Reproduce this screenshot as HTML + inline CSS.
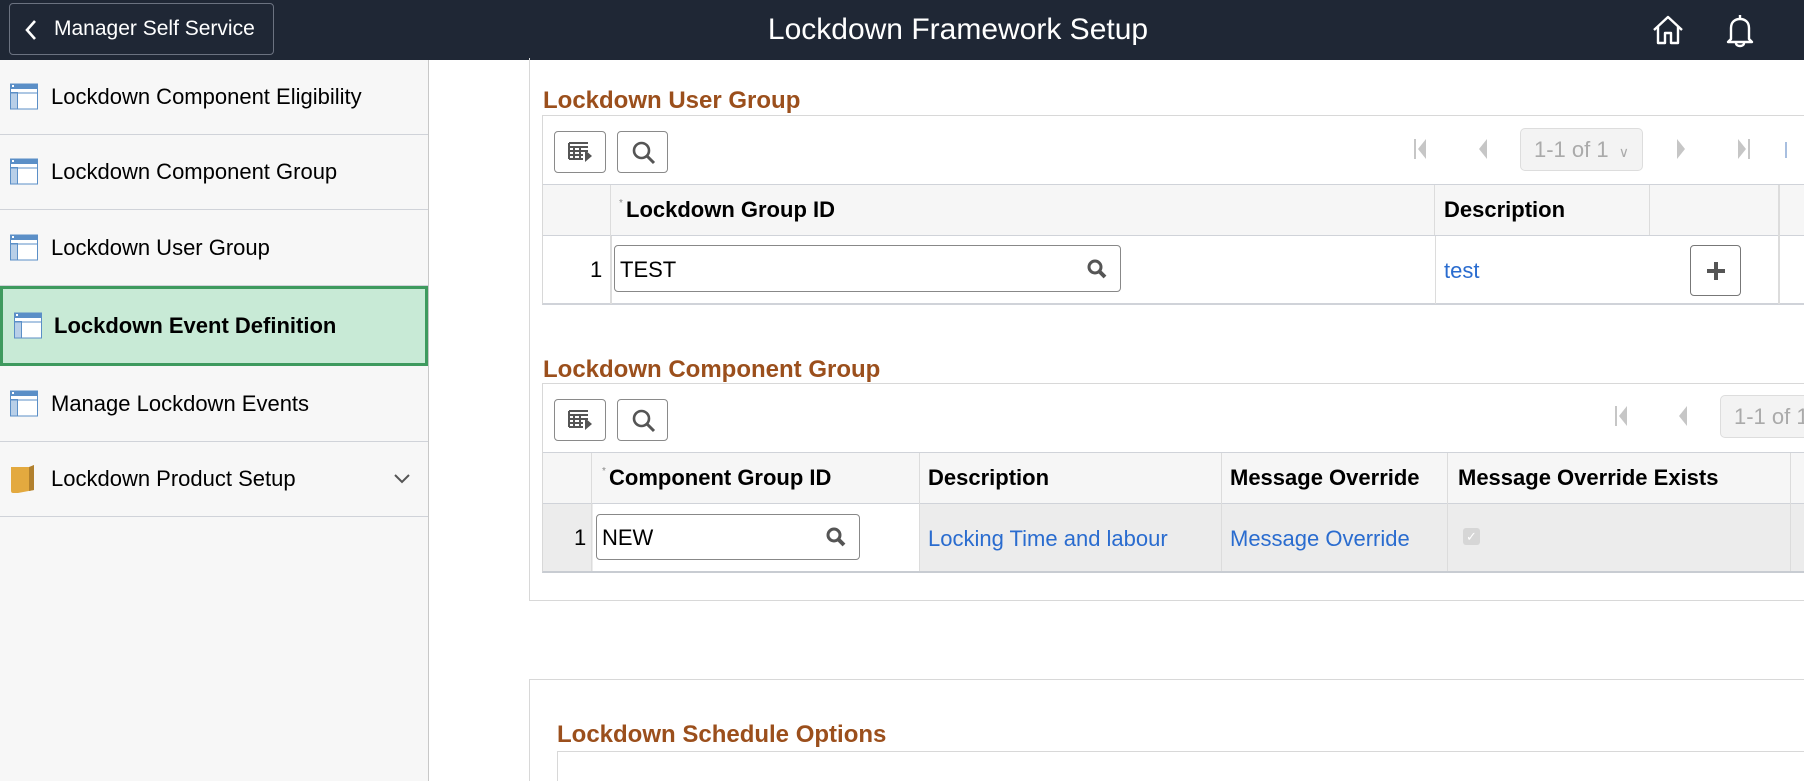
<!DOCTYPE html>
<html style="overflow:hidden;height:781px"><head><meta charset="utf-8">
<style>
*{box-sizing:border-box;margin:0;padding:0}
body{width:1804px;height:781px;overflow:hidden;background:#fff;font-family:"Liberation Sans",Arial,sans-serif;position:relative;color:#000}
.abs{position:absolute}
#hdr{left:0;top:0;width:1804px;height:60px;background:#1f2735}
#back{left:9px;top:3px;width:265px;height:52px;border:1px solid #6b7280;border-radius:4px;color:#fff;font-size:21px;line-height:50px;padding-left:44px}
#title{left:0;width:1916px;top:0;text-align:center;color:#fff;font-size:30px;line-height:60px}
#side{left:0;top:60px;width:429px;height:721px;background:#f7f7f7;border-right:1px solid #c8c8c8}
.item{position:absolute;left:0;width:428px;border-bottom:1px solid #d0d3d9;font-size:22px;color:#000}
.item span{position:absolute;left:51px;top:50%;transform:translateY(-50%)}
.item svg{position:absolute;left:10px;top:50%;transform:translateY(-50%)}
.sel{background:#c8ead6;border:3px solid #3e9a5e}
.box{border:1px solid #d8d8d8}
.h{color:#9b4f1c;font-weight:bold;font-size:24px}
.btn{position:absolute;width:52px;height:42px;border:1px solid #8a8a8a;border-radius:4px;background:#fff}
.cell{position:absolute;border-right:1px solid #dcdcdc;font-size:22px}
.th{font-weight:bold;background:#f6f6f6}
.inp{position:absolute;border:1px solid #888;border-radius:4px;background:#fff;font-size:22px;padding-left:5px}
.lnk{color:#2a6ccf;font-size:22px}
</style></head><body>
<div id="hdr" class="abs"></div>
<div id="back" class="abs"><svg class="abs" style="left:14px;top:15px" width="14" height="22" viewBox="0 0 14 22"><path d="M11 2 L3 11 L11 20" stroke="#fff" stroke-width="2.6" fill="none"/></svg>Manager Self Service</div>
<div id="title" class="abs">Lockdown Framework Setup</div>
<svg class="abs" style="left:1651px;top:14px" width="34" height="32" viewBox="0 0 34 32"><path d="M3 16 L17 3 L31 16 M7 13 V29 H14 V19 H20 V29 H27 V13" stroke="#fff" stroke-width="2.4" fill="none" stroke-linejoin="round"/></svg>
<svg class="abs" style="left:1725px;top:12px" width="30" height="36" viewBox="0 0 30 36"><path d="M15 3 V6 M6 27 V16 C6 10 10 7 15 7 C20 7 24 10 24 16 V27 L27 30 H3 L6 27 Z M11 31 C11 35 19 35 19 31" stroke="#fff" stroke-width="2.4" fill="none" stroke-linejoin="round"/></svg>

<div id="side" class="abs">
<svg width="0" height="0" style="position:absolute"><defs><g id="ic"><rect x="0.5" y="0.5" width="27" height="25" fill="#fff" stroke="#5b8fc7"/><rect x="0.5" y="0.5" width="27" height="5" fill="#5b8fc7"/><rect x="2" y="1.5" width="2" height="2" fill="#fff"/><rect x="0.5" y="9" width="7" height="16.5" fill="#b8cfe8" stroke="#5b8fc7"/><rect x="0.5" y="9" width="27" height="1" fill="#5b8fc7"/></g></defs></svg>
<div class="item" style="top:0;height:75px"><svg width="28" height="27"><use href="#ic"/></svg><span>Lockdown Component Eligibility</span></div>
<div class="item" style="top:75px;height:75px"><svg width="28" height="27"><use href="#ic"/></svg><span>Lockdown Component Group</span></div>
<div class="item" style="top:150px;height:76px"><svg width="28" height="27"><use href="#ic"/></svg><span>Lockdown User Group</span></div>
<div class="item sel" style="top:226px;height:80px"><svg width="28" height="27" style="left:11px"><use href="#ic"/></svg><span style="left:51px;font-weight:bold">Lockdown Event Definition</span></div>
<div class="item" style="top:306px;height:76px"><svg width="28" height="27"><use href="#ic"/></svg><span>Manage Lockdown Events</span></div>
<div class="item" style="top:382px;height:75px"><svg width="26" height="30" viewBox="0 0 26 30"><path d="M1 3 H20 L24 1 V26 L8 29 H3 C1 29 1 27 1 26 Z" fill="#e3a93f"/><path d="M19 3 L24 1 V26 L19 27 Z" fill="#b1802e"/></svg><span>Lockdown Product Setup</span><svg style="left:393px" width="18" height="12" viewBox="0 0 18 12"><path d="M2 2 L9 9 L16 2" stroke="#555" stroke-width="2" fill="none"/></svg></div>
</div>

<div class="abs box" style="left:529px;top:58px;width:1290px;height:543px;border-top:none"></div>
<div class="abs h" style="left:543px;top:87px">Lockdown User Group</div>
<div class="abs box" style="left:542px;top:115px;width:1280px;height:190px;border-bottom:2px solid #d0d3d9"></div>
<div class="btn" style="left:554px;top:131px"><svg class="abs" style="left:13px;top:9px" width="26" height="24" viewBox="0 0 26 24"><path d="M1 2 H20 M1 6 H20 M1 10 H20 M1 14 H15 M1 18 H15 M6 6 V18 M12 6 V18 M1 2 V18" stroke="#555" stroke-width="2" fill="none"/><path d="M17 9 L24 15 L17 21 Z" fill="#555"/></svg></div>
<div class="btn" style="left:617px;top:131px;width:51px"><svg class="abs" style="left:13px;top:8px" width="26" height="26" viewBox="0 0 26 26"><circle cx="10.5" cy="10.5" r="7.5" stroke="#555" stroke-width="2.6" fill="none"/><path d="M16 16 L23 23" stroke="#555" stroke-width="3"/></svg></div>
<svg class="abs" style="left:1413px;top:138px" width="16" height="22"><path d="M2 1 V21" stroke="#c6c6c6" stroke-width="2"/><path d="M13 1 L5 11 L13 21 Z" fill="#c6c6c6"/></svg>
<svg class="abs" style="left:1476px;top:138px" width="12" height="22"><path d="M11 1 L3 11 L11 21 Z" fill="#c6c6c6"/></svg>
<div class="abs" style="left:1520px;top:128px;width:123px;height:43px;background:#f3f3f3;border:1px solid #ddd;border-radius:5px;color:#aaa;font-size:22px;line-height:41px;padding-left:13px">1-1 of 1 <span style="font-size:14px;margin-left:4px">&#8744;</span></div>
<svg class="abs" style="left:1676px;top:138px" width="12" height="22"><path d="M1 1 L9 11 L1 21 Z" fill="#c6c6c6"/></svg>
<svg class="abs" style="left:1735px;top:138px" width="16" height="22"><path d="M14 1 V21" stroke="#c6c6c6" stroke-width="2"/><path d="M3 1 L11 11 L3 21 Z" fill="#c6c6c6"/></svg>
<div class="abs" style="left:1785px;top:142px;width:2px;height:16px;background:#a8bfe0"></div>

<div class="abs" style="left:543px;top:184px;width:1261px;height:52px;background:#f6f6f6;border-top:1px solid #d0d3d9;border-bottom:1px solid #d0d3d9"></div>
<div class="cell th" style="left:543px;top:185px;width:68px;height:119px;background:transparent"></div>
<div class="cell th" style="left:611px;top:185px;width:824px;height:50px;line-height:50px;padding-left:15px;background:transparent"><span style="font-size:10px;color:#888;font-weight:normal;position:absolute;left:8px;top:-6px">*</span>Lockdown Group ID</div>
<div class="cell th" style="left:1435px;top:185px;width:215px;height:50px;line-height:50px;padding-left:9px;background:transparent">Description</div>
<div class="cell" style="left:1650px;top:185px;width:129px;height:119px"></div>
<div class="cell" style="left:1779px;top:185px;width:1px;height:119px"></div>
<div class="cell" style="left:1435px;top:236px;width:1px;height:68px"></div>
<div class="cell" style="left:611px;top:236px;width:1px;height:68px"></div>
<div class="abs" style="left:590px;top:257px;font-size:22px">1</div>
<div class="inp" style="left:614px;top:245px;width:507px;height:47px;line-height:47px">TEST<svg class="abs" style="right:12px;top:12px" width="22" height="22" viewBox="0 0 22 22"><circle cx="9" cy="9" r="6" stroke="#555" stroke-width="3" fill="none"/><path d="M13 13 L19 19" stroke="#555" stroke-width="4"/></svg></div>
<div class="abs lnk" style="left:1444px;top:258px">test</div>
<div class="abs" style="left:1690px;top:245px;width:51px;height:51px;border:1px solid #777;border-radius:4px"><svg class="abs" style="left:15px;top:15px" width="20" height="20"><path d="M10 1 V19 M1 10 H19" stroke="#555" stroke-width="4"/></svg></div>

<div class="abs h" style="left:543px;top:356px">Lockdown Component Group</div>
<div class="abs box" style="left:542px;top:383px;width:1280px;height:190px;border-bottom:3px solid #c8ccd2"></div>
<div class="btn" style="left:554px;top:399px"><svg class="abs" style="left:13px;top:9px" width="26" height="24" viewBox="0 0 26 24"><path d="M1 2 H20 M1 6 H20 M1 10 H20 M1 14 H15 M1 18 H15 M6 6 V18 M12 6 V18 M1 2 V18" stroke="#555" stroke-width="2" fill="none"/><path d="M17 9 L24 15 L17 21 Z" fill="#555"/></svg></div>
<div class="btn" style="left:617px;top:399px;width:51px"><svg class="abs" style="left:13px;top:8px" width="26" height="26" viewBox="0 0 26 26"><circle cx="10.5" cy="10.5" r="7.5" stroke="#555" stroke-width="2.6" fill="none"/><path d="M16 16 L23 23" stroke="#555" stroke-width="3"/></svg></div>
<svg class="abs" style="left:1614px;top:405px" width="16" height="22"><path d="M2 1 V21" stroke="#c6c6c6" stroke-width="2"/><path d="M13 1 L5 11 L13 21 Z" fill="#c6c6c6"/></svg>
<svg class="abs" style="left:1676px;top:405px" width="12" height="22"><path d="M11 1 L3 11 L11 21 Z" fill="#c6c6c6"/></svg>
<div class="abs" style="left:1720px;top:395px;width:123px;height:43px;background:#f3f3f3;border:1px solid #ddd;border-radius:5px;color:#aaa;font-size:22px;line-height:41px;padding-left:13px">1-1 of 1</div>

<div class="abs" style="left:543px;top:452px;width:1261px;height:52px;background:#f6f6f6;border-top:1px solid #d0d3d9;border-bottom:1px solid #d0d3d9"></div>
<div class="abs" style="left:543px;top:504px;width:1261px;height:67px;background:#ececec"></div>
<div class="abs" style="left:593px;top:504px;width:327px;height:67px;background:#fff"></div>
<div class="cell" style="left:543px;top:453px;width:49px;height:118px"></div>
<div class="cell th" style="left:592px;top:453px;width:328px;height:118px;line-height:50px;padding-left:17px;background:transparent"><span style="font-size:10px;color:#888;font-weight:normal;position:absolute;left:10px;top:-6px">*</span>Component Group ID</div>
<div class="cell th" style="left:920px;top:453px;width:302px;height:118px;line-height:50px;padding-left:8px;background:transparent">Description</div>
<div class="cell th" style="left:1222px;top:453px;width:226px;height:118px;line-height:50px;padding-left:8px;background:transparent">Message Override</div>
<div class="cell th" style="left:1448px;top:453px;width:343px;height:118px;line-height:50px;padding-left:10px;background:transparent">Message Override Exists</div>
<div class="abs" style="left:574px;top:525px;font-size:22px">1</div>
<div class="inp" style="left:596px;top:514px;width:264px;height:46px;line-height:46px">NEW<svg class="abs" style="right:12px;top:11px" width="22" height="22" viewBox="0 0 22 22"><circle cx="9" cy="9" r="6" stroke="#555" stroke-width="3" fill="none"/><path d="M13 13 L19 19" stroke="#555" stroke-width="4"/></svg></div>
<div class="abs lnk" style="left:928px;top:526px">Locking Time and labour</div>
<div class="abs lnk" style="left:1230px;top:526px">Message Override</div>
<div class="abs" style="left:1463px;top:528px;width:17px;height:17px;background:#d6d6d6;border-radius:3px;color:#fff;font-size:13px;text-align:center;line-height:17px">&#10003;</div>

<div class="abs box" style="left:529px;top:679px;width:1275px;height:102px;border-right:none;border-bottom:none"></div>
<div class="abs h" style="left:557px;top:721px">Lockdown Schedule Options</div>
<div class="abs box" style="left:557px;top:751px;width:1247px;height:30px;border-right:none;border-bottom:none"></div>
</body></html>
